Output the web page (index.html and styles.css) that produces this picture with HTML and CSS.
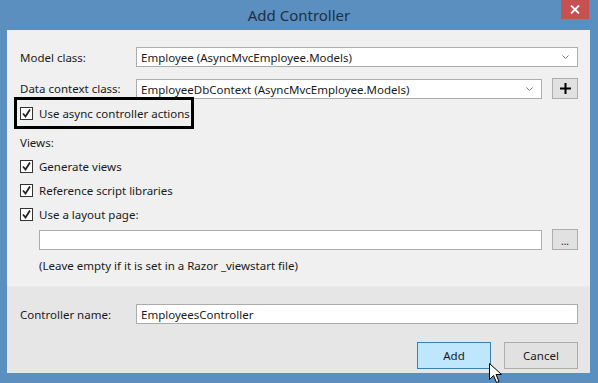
FILE: index.html
```html
<html>
    <head>
        <meta http-equiv="Content-Type" content="text/html; charset=utf-8">
        <link rel="stylesheet" href="styles.css">
    </head>
    <body>
        <div class="window">
            <div class="titlebar">
                <span class="title">Add Controller</span>
                <span class="close">
                    <svg width="10" height="9" viewBox="0 0 10 9"><path d="M1 0.5 L9 8.5 M9 0.5 L1 8.5" stroke="#fff" stroke-width="1.8"/></svg>
                </span>
            </div>
            <div class="client">
                <div class="main">
                    <div class="field">
                        <span class="label">Model class:</span>
                        <div class="combo">
                            <span>Employee (AsyncMvcEmployee.Models)</span>
                            <svg class="chevron" width="7" height="4" viewBox="0 0 7 4"><path d="M0.5 0.5 L3.5 3.5 L6.5 0.5" stroke="#777" fill="none"/></svg>
                        </div>
                    </div>
                    <div class="field second">
                        <span class="label">Data context class:</span>
                        <div class="combo">
                            <span>EmployeeDbContext (AsyncMvcEmployee.Models)</span>
                            <svg class="chevron" width="7" height="4" viewBox="0 0 7 4"><path d="M0.5 0.5 L3.5 3.5 L6.5 0.5" stroke="#777" fill="none"/></svg>
                        </div>
                        <div class="btn-small plus">
                            <svg width="11" height="11" viewBox="0 0 11 11"><path d="M5.5 0 V11 M0 5.5 H11" stroke="#000" stroke-width="2"/></svg>
                        </div>
                    </div>
                    <div class="highlight">
                        <span class="check"><svg width="11" height="11" viewBox="0 0 11 11"><path d="M2 5.5 L4.5 8.5 L9 1.5" stroke="#222" stroke-width="1.8" fill="none"/></svg></span>
                        <span>Use async controller actions</span>
                    </div>
                    <div class="group-label">Views:</div>
                    <div class="check-row">
                        <span class="check"><svg width="11" height="11" viewBox="0 0 11 11"><path d="M2 5.5 L4.5 8.5 L9 1.5" stroke="#222" stroke-width="1.8" fill="none"/></svg></span>
                        <span>Generate views</span>
                    </div>
                    <div class="check-row">
                        <span class="check"><svg width="11" height="11" viewBox="0 0 11 11"><path d="M2 5.5 L4.5 8.5 L9 1.5" stroke="#222" stroke-width="1.8" fill="none"/></svg></span>
                        <span>Reference script libraries</span>
                    </div>
                    <div class="check-row">
                        <span class="check"><svg width="11" height="11" viewBox="0 0 11 11"><path d="M2 5.5 L4.5 8.5 L9 1.5" stroke="#222" stroke-width="1.8" fill="none"/></svg></span>
                        <span>Use a layout page:</span>
                    </div>
                    <div class="path-row">
                        <div class="textbox"></div>
                        <div class="btn-small dots">...</div>
                    </div>
                    <div class="hint">(Leave empty if it is set in a Razor _viewstart file)</div>
                </div>
                <div class="footer">
                    <div class="field">
                        <span class="label">Controller name:</span>
                        <div class="textbox">EmployeesController</div>
                    </div>
                    <div class="buttons">
                        <div class="button primary">Add</div>
                        <div class="button">Cancel</div>
                    </div>
                </div>
            </div>
            <svg class="cursor" width="14" height="21" viewBox="0 0 14 21">
                <path d="M0.5 0.5 L0.5 16.5 L4.5 12.5 L7.5 19.5 L10 18.5 L7 11.5 L12.5 11.5 Z" fill="#fff" stroke="#000"/>
            </svg>
        </div>
    </body>
</html>
```

FILE: styles.css
```css
/* dialog frame */
body{
    margin: 0;
    background: #5b8fc0;
    font-family: "Noto Sans", sans-serif;
    font-size: 11.5px;
    color: #1a1a1a;
}
.window{
    position: relative;
    width: 598px;
    height: 383px;
    display: flex;
    flex-direction: column;
}
.titlebar{
    height: 30px;
    display: flex;
    align-items: center;
    justify-content: center;
    position: relative;
}
.title{
    font-size: 15px;
    color: #1c2f45;
    margin-top: -1px;
}
.close{
    position: absolute;
    left: 561px;
    top: 0;
    width: 28px;
    height: 19px;
    background: #c75050;
    display: flex;
    align-items: center;
    justify-content: center;
}
.client{
    margin: 0 8px 0 7px;
    height: 343px;
    display: flex;
    flex-direction: column;
}
/* upper part */
.main{
    height: 256px;
    background: #f0f0f0;
    padding: 17px 12px 0 13px;
    box-sizing: border-box;
    display: flex;
    flex-direction: column;
}
.field{
    display: flex;
    align-items: center;
    height: 20px;
}
.field.second{
    margin-top: 11px;
    height: 21px;
}
.label{
    width: 116px;
    flex: none;
}
.combo{
    flex: 1;
    height: 20px;
    box-sizing: border-box;
    border: 1px solid #acacac;
    background: #fff;
    display: flex;
    align-items: center;
    padding: 0 8px 0 4px;
}
.combo span{
    flex: 1;
}
.field.second .combo{
    margin-top: 1px;
}
.btn-small{
    width: 26px;
    height: 21px;
    box-sizing: border-box;
    border: 1px solid #adadad;
    background: #e1e1e1;
    margin-left: 10px;
    display: flex;
    align-items: center;
    justify-content: center;
}
.dots{
    font-size: 10px;
    line-height: 10px;
    padding-top: 2px;
}
.highlight{
    margin: -2px 0 0 -6px;
    width: 180px;
    height: 32px;
    box-sizing: border-box;
    border: 3px solid #000;
    display: flex;
    align-items: center;
    padding-left: 3px;
    white-space: nowrap;
}
.check{
    flex: none;
    width: 13px;
    height: 13px;
    box-sizing: border-box;
    border: 1px solid #333;
    background: #fff;
    margin-right: 6px;
    display: flex;
    align-items: center;
    justify-content: center;
}
.group-label{
    margin-top: 1px;
    height: 24px;
    display: flex;
    align-items: center;
}
.check-row{
    height: 24px;
    display: flex;
    align-items: center;
}
.path-row{
    margin: 3px 0 0 19px;
    display: flex;
    align-items: center;
}
.textbox{
    flex: 1;
    height: 20px;
    box-sizing: border-box;
    border: 1px solid #acacac;
    background: #fff;
    display: flex;
    align-items: center;
    padding-left: 4px;
}
.hint{
    margin: 3px 0 0 19px;
    height: 24px;
    display: flex;
    align-items: center;
}
/* lower part */
.footer{
    flex: 1;
    background: #e6e6e6;
    border-top: 1px solid #e9e9e9;
    padding: 17px 12px 0 13px;
    display: flex;
    flex-direction: column;
}
.buttons{
    display: flex;
    justify-content: flex-end;
    gap: 13px;
    margin-top: 18px;
}
.button{
    width: 74px;
    height: 27px;
    box-sizing: border-box;
    border: 1px solid #adadad;
    background: #e1e1e1;
    display: flex;
    align-items: center;
    justify-content: center;
}
.button.primary{
    background: #bee6fd;
    border-color: #3c7fb1;
}
.cursor{
    position: absolute;
    left: 489px;
    top: 363px;
}
```
